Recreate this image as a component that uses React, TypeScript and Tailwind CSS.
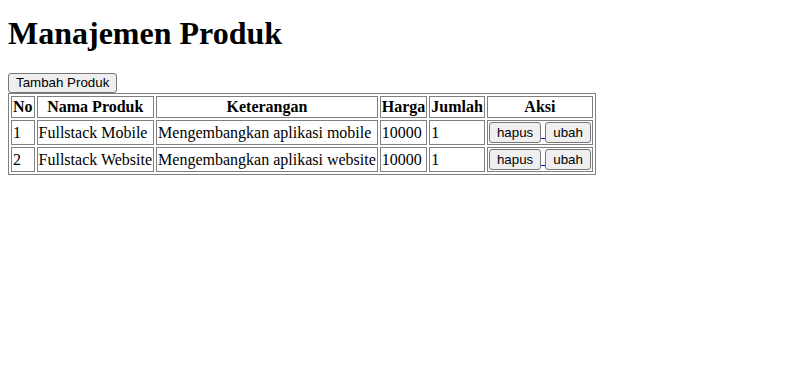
const products = [
  { id: 1, nama: "Fullstack Mobile", keterangan: "Mengembangkan aplikasi mobile", harga: 10000, jumlah: 1 },
  { id: 2, nama: "Fullstack Website", keterangan: "Mengembangkan aplikasi website", harga: 10000, jumlah: 1 },
];

const btn =
  "rounded-[3px] border border-[#767676] bg-[#efefef] px-[7px] text-[13.333px] leading-[16px] text-black font-['Liberation_Sans',Arial,sans-serif] hover:bg-[#e5e5e5]";
const cell = "border border-[#808080] p-px";

export default function App() {
  return (
    <div className="min-h-screen bg-white p-2 font-['Liberation_Serif','Times_New_Roman',serif] text-base leading-[normal] text-black">
      <h1 className="mt-[7px] mb-[21px] text-[32px] font-bold leading-[37px]">Manajemen Produk</h1>
      <button className={`${btn} py-px`}>Tambah Produk</button>
      <table className="border-separate border-spacing-[2px] border border-[#808080]">
        <thead>
          <tr>
            <th className={cell}>No</th>
            <th className={cell}>Nama Produk</th>
            <th className={cell}>Keterangan</th>
            <th className={cell}>Harga</th>
            <th className={cell}>Jumlah</th>
            <th className={cell}>Aksi</th>
          </tr>
        </thead>
        <tbody>
          {products.map((p) => (
            <tr key={p.id}>
              <td className={cell}>{p.id}</td>
              <td className={cell}>{p.nama}</td>
              <td className={cell}>{p.keterangan}</td>
              <td className={cell}>{p.harga}</td>
              <td className={cell}>{p.jumlah}</td>
              <td className={cell}>
                <a href="#" className="text-[#0000ee] underline">
                  <button className={`${btn} py-[1.5px]`}>hapus</button>{" "}
                </a>
                <a href="#" className="text-[#0000ee] underline">
                  <button className={`${btn} py-[1.5px]`}>ubah</button>
                </a>
              </td>
            </tr>
          ))}
        </tbody>
      </table>
    </div>
  );
}
